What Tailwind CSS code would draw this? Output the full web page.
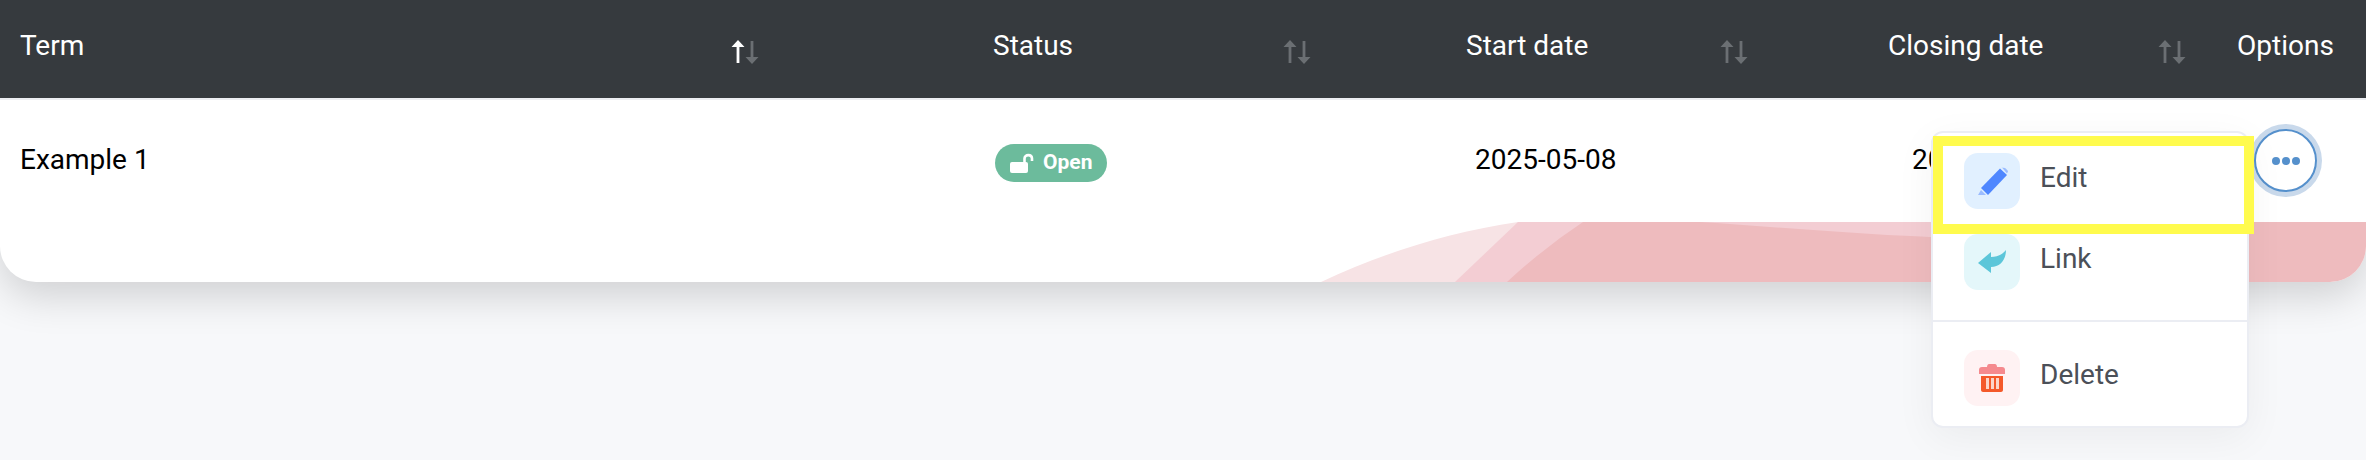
<!DOCTYPE html>
<html lang="en">
<head>
    <meta charset="UTF-8">
    <title>Terms</title>
    <script src="https://cdn.jsdelivr.net/npm/@tailwindcss/browser@4"></script>
</head>
<body class="bg-[#f7f8fa] font-['Roboto',sans-serif]">
<div class="relative w-[2366px] h-[460px] overflow-hidden">

    <!-- table card -->
    <div class="relative h-[282px] bg-white rounded-b-[36px] overflow-hidden shadow-[0_14px_40px_rgba(0,0,0,0.16)]">
        <svg class="absolute left-0 bottom-0" width="2366" height="60" viewBox="0 0 2366 60">
            <path d="M1321 60 C1385 30 1450 10 1518 0 L1600 0 L1600 60 Z" fill="#f7e3e5"/>
            <path d="M1455 60 L1518 0 L1960 0 L1960 60 Z" fill="#f3cdd3"/>
            <path d="M1507 60 Q1545 25 1583 0 L1700 0 C1780 5 1860 13 1960 16 L1960 60 Z" fill="#eebbbe"/>
            <rect x="1950" y="0" width="416" height="60" fill="#eebbbe"/>
        </svg>

        <!-- header -->
        <div class="relative flex h-[98px] items-center bg-[#363a3e] text-white text-[28px] leading-none">
            <div class="flex items-center w-[973px] pl-5">
                <span class="w-[711px] -mt-[6px]">Term</span>
                <svg width="28" height="26" viewBox="0 0 28 26" class="mt-[6px]">
                    <path d="M7 1 L13.5 8 L8.4 8 L8.4 24 L5.6 24 L5.6 8 L0.5 8 Z" fill="#ffffff"/>
                    <path d="M21 25 L27.5 18 L22.4 18 L22.4 2 L19.6 2 L19.6 18 L14.5 18 Z" fill="#6b6f73"/>
                </svg>
            </div>
            <div class="flex items-center w-[473px] pl-5">
                <span class="w-[290px] -mt-[6px]">Status</span>
                <svg width="28" height="26" viewBox="0 0 28 26" class="mt-[6px]">
                    <path d="M7 1 L13.5 8 L8.4 8 L8.4 24 L5.6 24 L5.6 8 L0.5 8 Z" fill="#6b6f73"/>
                    <path d="M21 25 L27.5 18 L22.4 18 L22.4 2 L19.6 2 L19.6 18 L14.5 18 Z" fill="#6b6f73"/>
                </svg>
            </div>
            <div class="flex items-center w-[422px] pl-5">
                <span class="w-[254px] -mt-[6px]">Start date</span>
                <svg width="28" height="26" viewBox="0 0 28 26" class="mt-[6px]">
                    <path d="M7 1 L13.5 8 L8.4 8 L8.4 24 L5.6 24 L5.6 8 L0.5 8 Z" fill="#6b6f73"/>
                    <path d="M21 25 L27.5 18 L22.4 18 L22.4 2 L19.6 2 L19.6 18 L14.5 18 Z" fill="#6b6f73"/>
                </svg>
            </div>
            <div class="flex items-center w-[349px] pl-5">
                <span class="w-[270px] -mt-[6px]">Closing date</span>
                <svg width="28" height="26" viewBox="0 0 28 26" class="mt-[6px]">
                    <path d="M7 1 L13.5 8 L8.4 8 L8.4 24 L5.6 24 L5.6 8 L0.5 8 Z" fill="#6b6f73"/>
                    <path d="M21 25 L27.5 18 L22.4 18 L22.4 2 L19.6 2 L19.6 18 L14.5 18 Z" fill="#6b6f73"/>
                </svg>
            </div>
            <div class="pl-5 -mt-[6px]">Options</div>
        </div>
        <div class="relative h-[2px] bg-[#eceef2]"></div>

        <!-- row -->
        <div class="relative flex h-[122px] items-center text-black text-[28px] leading-none">
            <div class="w-[973px] pl-5 -mt-[2px]">Example 1</div>
            <div class="w-[473px] pl-[22px]">
                <span class="mt-[3px] inline-flex h-[38px] w-[112px] items-center rounded-full bg-[#6cbb9c] pl-[15px] text-[21px] font-bold text-white">
                    <svg width="24" height="20" viewBox="0 0 24 20" class="shrink-0">
                        <rect x="0" y="9" width="18" height="11" rx="2" fill="#ffffff"/>
                        <path d="M14.5 9 L14.5 5.5 C14.5 1 22 1 22 5.5 L22 8" fill="none" stroke="#ffffff" stroke-width="2.6"/>
                    </svg>
                    <span class="ml-[9px]">Open</span>
                </span>
            </div>
            <div class="w-[422px] pl-[29px] -mt-[2px]">2025-05-08</div>
            <div class="w-[349px] pl-[44px] -mt-[2px]">2025-05-08</div>
            <div class="pl-[37px]">
                <button class="flex size-[63px] items-center justify-center gap-[2px] rounded-full border-2 border-[#5590cc] bg-white shadow-[0_0_0_5px_#c9d9eb] -mt-[1px]">
                    <span class="size-2 rounded-full bg-[#5590cc]"></span>
                    <span class="size-2 rounded-full bg-[#5590cc]"></span>
                    <span class="size-2 rounded-full bg-[#5590cc]"></span>
                </button>
            </div>
        </div>
    </div>

    <!-- dropdown -->
    <div class="absolute left-[1931px] top-[131px] w-[318px] rounded-[12px] border-2 border-[#ebedf3] bg-white pt-5 pb-5 text-[28px] leading-none text-[#4b5058] shadow-[0_10px_40px_rgba(0,0,0,0.05)]">
        <div class="flex items-center gap-5 pl-[31px]">
            <span class="flex size-14 items-center justify-center rounded-[14px] bg-[#e1f0ff]">
                <svg width="56" height="56" viewBox="0 0 56 56">
                    <path d="M17 35 L36 15.500 L43 22 L24 42 Z" fill="#4f87ff"/>
                    <path d="M37.500 14 L39 15 C40 14 42 15 44 18 C44 19 43 20 43 20.500 Z" fill="#9bbcff"/>
                    <path d="M14 42 L17 37 L22 42 Z" fill="#9bbcff"/>
                </svg>
            </span>
            <span class="-mt-[6px]">Edit</span>
        </div>
        <div class="mt-[25px] flex items-center gap-5 pl-[31px]">
            <span class="flex size-14 items-center justify-center rounded-[14px] bg-[#e4f7fa]">
                <svg width="56" height="56" viewBox="0 0 56 56">
                    <path d="M14 29 L27 18 L27 23 C33 23 38 21 42 16 C42 26 36 33 27 33 L27 39 Z" fill="#5cc6d9"/>
                </svg>
            </span>
            <span class="-mt-[6px]">Link</span>
        </div>
        <div class="mt-[30px] h-[2px] bg-[#ebedf3]"></div>
        <div class="mt-[28px] flex items-center gap-5 pl-[31px]">
            <span class="flex size-14 items-center justify-center rounded-[14px] bg-[#fff2f3]">
                <svg width="56" height="56" viewBox="0 0 56 56">
                    <path d="M23 17 C23 15 24 14 25 14 L31 14 C32 14 33 15 33 17 Z" fill="#f58a8e"/>
                    <path d="M15 24 L15 20 C15 18 16 17 18 17 L38 17 C40 17 41 18 41 20 L41 24 Z" fill="#f58a8e"/>
                    <path d="M17 26 L39 26 L39 40 C39 41 38 42 37 42 L19 42 C18 42 17 41 17 40 Z" fill="#f4592a"/>
                    <rect x="22" y="28" width="3" height="11" fill="#fbd5c8"/>
                    <rect x="27" y="28" width="3" height="11" fill="#fbd5c8"/>
                    <rect x="32" y="28" width="3" height="11" fill="#fbd5c8"/>
                </svg>
            </span>
            <span class="-mt-[6px]">Delete</span>
        </div>
    </div>

    <!-- highlight -->
    <div class="absolute left-[1933px] top-[136px] h-[98px] w-[321px] border-[10px] border-[#fffb4d]"></div>
</div>
</body>
</html>
